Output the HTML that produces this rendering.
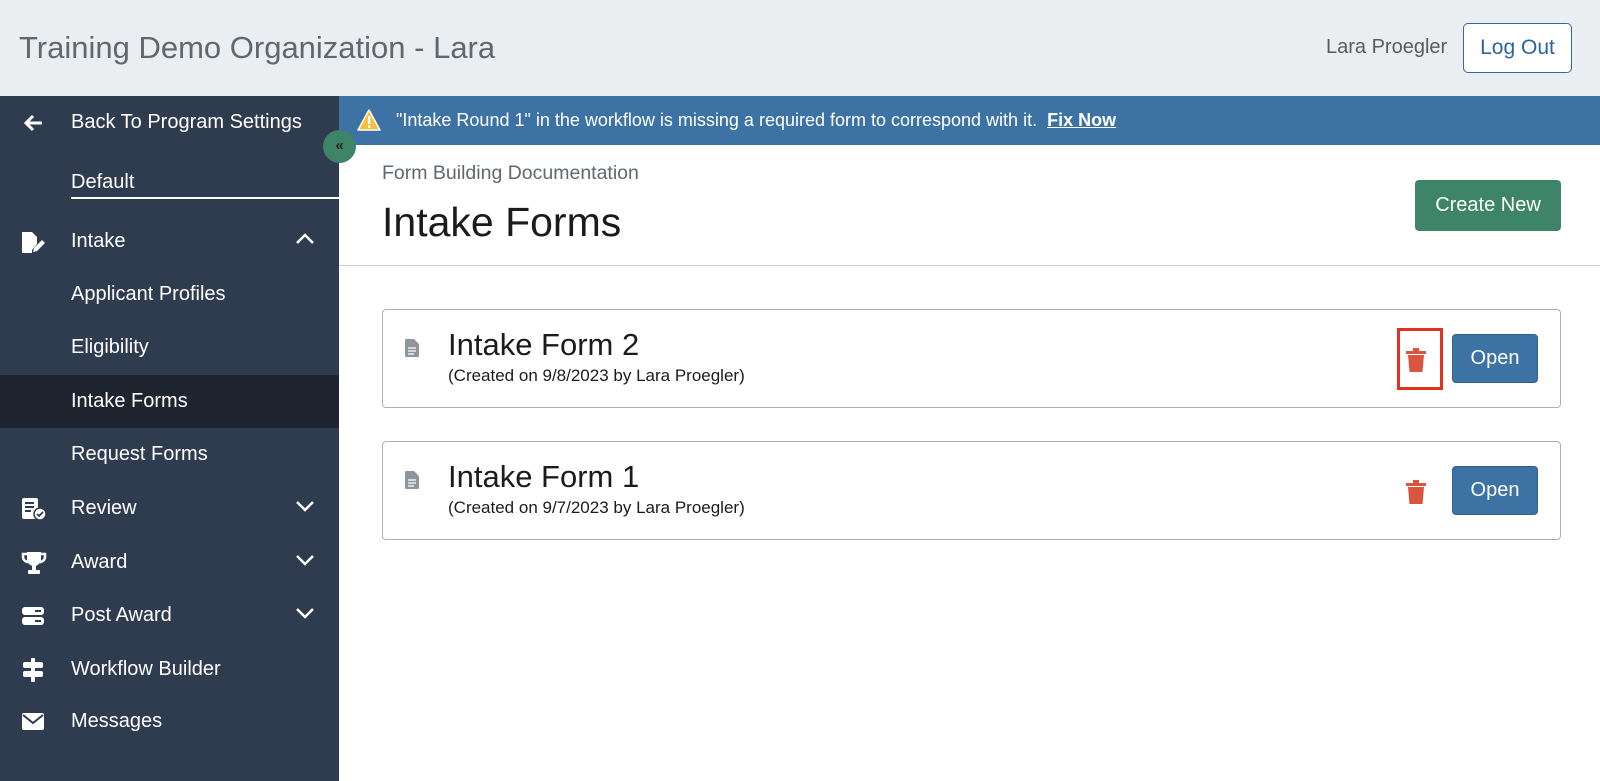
<!DOCTYPE html>
<html><head><style>
*{box-sizing:border-box;margin:0;padding:0}
body{width:1600px;height:781px;overflow:hidden;font-family:"Liberation Sans",sans-serif;background:#fff;position:relative}
.hdr{position:absolute;left:0;top:0;width:1600px;height:96px;background:#ebeef0}
.hdr .t{position:absolute;left:19px;top:30px;font-size:31px;color:#5f676f}
.hdr .u{position:absolute;left:1326px;top:36px;font-size:20px;color:#555c63}
.hdr .lo{position:absolute;left:1463px;top:23px;width:109px;height:50px;border:1px solid #2e6aa3;border-radius:5px;background:#fff;color:#2a64a0;font-size:21px;text-align:center;line-height:48px}
.side{position:absolute;left:0;top:96px;width:339px;height:685px;background:#2f3b4e;color:#fff}
.it{position:absolute;left:0;width:339px;height:53px;font-size:20px;line-height:53px}
.it .l{position:absolute;left:71px;top:0}
.it .ic{position:absolute;left:21px;top:15px;width:26px;height:24px}
.it .ch{position:absolute;left:295px;top:17px}
.act{background:#1f2530}
.ban{position:absolute;left:339px;top:96px;width:1261px;height:49px;background:#3d72a4;color:#fff;font-size:18px;line-height:49px}
.card{position:absolute;left:382px;width:1179px;height:99px;border:1px solid #a9b0b5;border-radius:4px}
.card .ti{position:absolute;left:65px;top:17px;font-size:31px;color:#1b1b1b}
.card .sub{position:absolute;left:65px;top:56px;font-size:17px;color:#1b1b1b}
.card .fi{position:absolute;left:22px;top:29px}
.card .open{position:absolute;left:1069px;top:24px;width:86px;height:49px;background:#3d72a4;border:1px solid #2e5f8e;border-radius:4px;color:#fff;font-size:20px;text-align:center;line-height:47px}
.card .tr{position:absolute;left:1022px;top:38px}
</style></head><body>
<div class="hdr"><div class="t">Training Demo Organization - Lara</div><div class="u">Lara Proegler</div><div class="lo">Log Out</div></div>
<div class="side">
 <div class="it" style="top:0"><svg class="ic" viewBox="0 0 26 24"><path d="M21 12H5M12 5l-7 7 7 7" stroke="#fff" stroke-width="3" fill="none"/></svg><span class="l">Back To Program Settings</span></div>
 <div class="it" style="top:60px"><span class="l">Default</span></div>
 <div style="position:absolute;left:71px;top:101px;width:268px;height:2px;background:#fff"></div>
 <div class="it" style="top:119px"><svg class="ic" viewBox="0 0 26 24"><path d="M1 2h10l5 5v7l-5 6v3H1z" fill="#fff"/><path d="M12 22l1-4 8-8 3 3-8 8z" fill="#fff"/></svg><span class="l">Intake</span><svg class="ch" width="20" height="14" viewBox="0 0 20 14"><path d="M2 11l8-8 8 8" stroke="#fff" stroke-width="2.5" fill="none"/></svg></div>
 <div class="it" style="top:172px"><span class="l">Applicant Profiles</span></div>
 <div class="it" style="top:225px"><span class="l">Eligibility</span></div>
 <div class="it act" style="top:279px"><span class="l">Intake Forms</span></div>
 <div class="it" style="top:332px"><span class="l">Request Forms</span></div>
 <div class="it" style="top:386px"><svg class="ic" viewBox="0 0 26 24"><rect x="1" y="1" width="16" height="21" rx="2" fill="#fff"/><path d="M4 6h9M4 10h9M4 14h6" stroke="#2f3b4e" stroke-width="2"/><circle cx="19" cy="17" r="6" fill="#fff" stroke="#2f3b4e" stroke-width="1.5"/><path d="M16 17l2 2 4-4" stroke="#2f3b4e" stroke-width="1.8" fill="none"/></svg><span class="l">Review</span><svg class="ch" width="20" height="14" viewBox="0 0 20 14"><path d="M2 3l8 8 8-8" stroke="#fff" stroke-width="2.5" fill="none"/></svg></div>
 <div class="it" style="top:440px"><svg class="ic" viewBox="0 0 26 24"><path d="M6 1h14v7a7 7 0 0 1-14 0z" fill="#fff"/><path d="M6 3H2v3c0 3 3 5 5 5M20 3h4v3c0 3-3 5-5 5" stroke="#fff" stroke-width="2.5" fill="none"/><rect x="11" y="14" width="4" height="5" fill="#fff"/><rect x="7" y="19" width="12" height="4" rx="1" fill="#fff"/></svg><span class="l">Award</span><svg class="ch" width="20" height="14" viewBox="0 0 20 14"><path d="M2 3l8 8 8-8" stroke="#fff" stroke-width="2.5" fill="none"/></svg></div>
 <div class="it" style="top:493px"><svg class="ic" viewBox="0 0 26 24"><rect x="1" y="3" width="22" height="8" rx="3" fill="#fff"/><rect x="1" y="13" width="22" height="8" rx="3" fill="#fff"/><rect x="14" y="6" width="6" height="2" fill="#2f3b4e"/><rect x="14" y="16" width="6" height="2" fill="#2f3b4e"/></svg><span class="l">Post Award</span><svg class="ch" width="20" height="14" viewBox="0 0 20 14"><path d="M2 3l8 8 8-8" stroke="#fff" stroke-width="2.5" fill="none"/></svg></div>
 <div class="it" style="top:547px"><svg class="ic" viewBox="0 0 26 24"><rect x="10" y="0" width="4" height="24" rx="1" fill="#fff"/><rect x="2" y="4" width="20" height="6" rx="2" fill="#fff"/><rect x="2" y="13" width="20" height="6" rx="2" fill="#fff"/></svg><span class="l">Workflow Builder</span></div>
 <div class="it" style="top:599px"><svg class="ic" viewBox="0 0 26 24"><rect x="1" y="3" width="22" height="17" rx="2" fill="#fff"/><path d="M2 5l10 8 10-8" stroke="#2f3b4e" stroke-width="2" fill="none"/></svg><span class="l">Messages</span></div>
</div>
<div style="position:absolute;left:323px;top:130px;width:33px;height:33px;border-radius:50%;background:#3d8468;color:#1c2a25;font-size:15px;font-weight:bold;text-align:center;line-height:31px;z-index:2">«</div>
<div class="ban"><svg style="position:absolute;left:18px;top:13px" width="24" height="22" viewBox="0 0 24 22"><path d="M12 1L23 21H1z" fill="#f6bf3c" stroke="#fff" stroke-width="1.5" stroke-linejoin="round"/><rect x="11" y="7" width="2.4" height="8" fill="#fff"/><rect x="11" y="16.5" width="2.4" height="2.4" fill="#fff"/></svg><span style="position:absolute;left:57px">"Intake Round 1" in the workflow is missing a required form to correspond with it.&nbsp; <b style="text-decoration:underline">Fix Now</b></span></div>
<div style="position:absolute;left:382px;top:162px;font-size:19.5px;color:#5f676f">Form Building Documentation</div>
<div style="position:absolute;left:382px;top:199px;font-size:41px;color:#1b1b1b">Intake Forms</div>
<div style="position:absolute;left:1415px;top:180px;width:146px;height:51px;background:#3d8468;border-radius:4px;color:#fff;font-size:20px;text-align:center;line-height:51px">Create New</div>
<div style="position:absolute;left:339px;top:265px;width:1261px;height:1px;background:#cfd3d6"></div>
<div class="card" style="top:309px"><svg class="fi" width="14" height="18" viewBox="0 0 14 18"><path d="M0 1a1 1 0 0 1 1-1h8l5 5v12a1 1 0 0 1-1 1H1a1 1 0 0 1-1-1z" fill="#8d969c"/><path d="M3 9h8M3 12h8M3 15h6" stroke="#fff" stroke-width="1.2"/></svg><div class="ti">Intake Form 2</div><div class="sub">(Created on 9/8/2023 by Lara Proegler)</div><div style="position:absolute;left:1014px;top:18px;width:46px;height:62px;border:3px solid #e0321f"></div><svg class="tr" width="22" height="24" viewBox="0 0 22 24"><rect x="1" y="3" width="20" height="3" fill="#d9553f"/><rect x="8" y="0" width="6" height="3" fill="#d9553f"/><path d="M3 7h16l-1.5 17h-13z" fill="#d9553f"/></svg><div class="open">Open</div></div>
<div class="card" style="top:441px"><svg class="fi" width="14" height="18" viewBox="0 0 14 18"><path d="M0 1a1 1 0 0 1 1-1h8l5 5v12a1 1 0 0 1-1 1H1a1 1 0 0 1-1-1z" fill="#8d969c"/><path d="M3 9h8M3 12h8M3 15h6" stroke="#fff" stroke-width="1.2"/></svg><div class="ti">Intake Form 1</div><div class="sub">(Created on 9/7/2023 by Lara Proegler)</div><svg class="tr" width="22" height="24" viewBox="0 0 22 24"><rect x="1" y="3" width="20" height="3" fill="#d9553f"/><rect x="8" y="0" width="6" height="3" fill="#d9553f"/><path d="M3 7h16l-1.5 17h-13z" fill="#d9553f"/></svg><div class="open">Open</div></div>
</body></html>
